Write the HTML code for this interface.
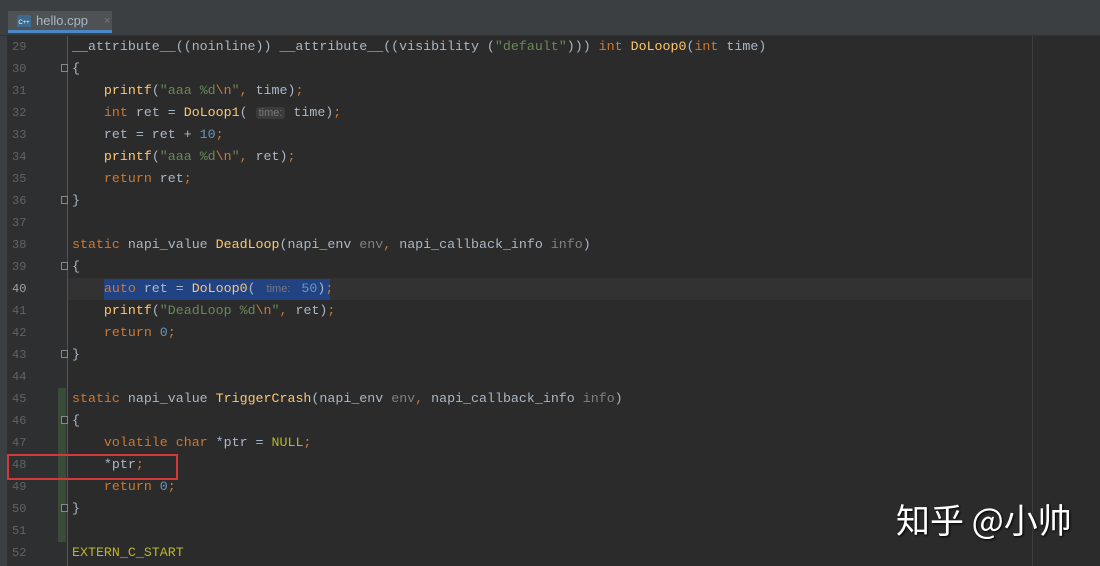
<!DOCTYPE html><html><head><meta charset="utf-8"><style>
body{margin:0;width:1100px;height:566px;overflow:hidden;background:#2b2b2b;position:relative;font-family:"Liberation Mono",monospace;}
.top{position:absolute;left:0;top:0;width:1100px;height:9px;background:#3c3f41;border-bottom:1px solid #323232}
.tabs{position:absolute;left:0;top:9px;width:1100px;height:26px;background:#3c3f41;border-bottom:1px solid #323232}
.tab{position:absolute;left:8px;top:2px;width:104px;height:22px;background:#4e5254;border-bottom:3px solid #4a88c7;box-sizing:border-box;color:#a9b7c6;font:13px "Liberation Sans",sans-serif;line-height:20px;padding-left:28px}
.tab i{position:absolute;left:9px;top:4px;width:14px;height:12px;background:#3d6a8c;font-style:normal;font-size:6px;color:#fff;line-height:16px;text-align:center}
.tab b{position:absolute;left:96px;top:0;color:#777;font-weight:normal;font-size:11px}
.strip{position:absolute;left:0;top:36px;width:7px;height:530px;background:#3c3f41}
.gut{position:absolute;left:7px;top:36px;width:60px;height:530px;background:#2e2f30;border-right:1px solid #555}
.rm{position:absolute;left:1032px;top:36px;width:1px;height:530px;background:#3d3d3d}
.ln{position:absolute;left:12px;width:30px;color:#606366;font-size:12px;line-height:22px}
.code{position:absolute;left:72px;color:#a9b7c6;font-size:13.3px;line-height:22px;white-space:pre}
.k{color:#cc7832}.f{color:#ffc66d}.s{color:#6a8759}.n{color:#6897bb}.g{color:#808080}.h{color:#787878;font-family:"Liberation Sans",sans-serif;font-size:11px;background:#3b3b3b;padding:0 3px;border-radius:3px}.m{color:#bbb529}
.cur{position:absolute;left:68px;top:278px;width:964px;height:22px;background:#323232}
.sel{position:absolute;left:104px;top:279px;width:226px;height:21px;background:#214283}
.green{position:absolute;left:58px;top:388px;width:8px;height:154px;background:#384c38}
.red{position:absolute;left:7px;top:454px;width:167px;height:22px;border:2px solid #d23a3a}
.wm{position:absolute;left:896px;top:494px;color:#fff;font:34px "Noto Sans CJK SC",sans-serif;text-shadow:1px 1px 2px #000}
.fold{position:absolute;left:61px;width:7px;height:8px;border:1px solid #888;box-sizing:border-box;background:#2e2f30}
</style></head><body>
<div class="top"></div>
<div class="tabs"><div class="tab"><i>C++</i>hello.cpp<b>×</b></div></div>
<div class="strip"></div><div class="gut"></div><div class="rm"></div>
<div class="cur"></div><div class="sel"></div><div class="green"></div>
<div class="fold" style="top:64px"></div><div class="fold" style="top:196px"></div><div class="fold" style="top:262px"></div><div class="fold" style="top:350px"></div><div class="fold" style="top:416px"></div><div class="fold" style="top:504px"></div>
<div class="ln" style="top:36px">29<br>30<br>31<br>32<br>33<br>34<br>35<br>36<br>37<br>38<br>39<br><span style="color:#a4a3a3">40</span><br>41<br>42<br>43<br>44<br>45<br>46<br>47<br>48<br>49<br>50<br>51<br>52</div>
<div class="code" style="top:36px">__attribute__((noinline)) __attribute__((visibility (<span class="s">"default"</span>))) <span class="k">int</span> <span class="f">DoLoop0</span>(<span class="k">int</span> time)
{
    <span class="f">printf</span>(<span class="s">"aaa %d<span class="k">\n</span>"</span><span class="k">,</span> time)<span class="k">;</span>
    <span class="k">int</span> ret = <span class="f">DoLoop1</span>( <span class="h">time:</span> time)<span class="k">;</span>
    ret = ret + <span class="n">10</span><span class="k">;</span>
    <span class="f">printf</span>(<span class="s">"aaa %d<span class="k">\n</span>"</span><span class="k">,</span> ret)<span class="k">;</span>
    <span class="k">return</span> ret<span class="k">;</span>
}

<span class="k">static</span> napi_value <span class="f">DeadLoop</span>(napi_env <span class="g">env</span><span class="k">,</span> napi_callback_info <span class="g">info</span>)
{
    <span class="k">auto</span> ret = <span class="f">DoLoop0</span>( <span class="h" style="background:none">time:</span> <span class="n">50</span>)<span class="k">;</span>
    <span class="f">printf</span>(<span class="s">"DeadLoop %d<span class="k">\n</span>"</span><span class="k">,</span> ret)<span class="k">;</span>
    <span class="k">return</span> <span class="n">0</span><span class="k">;</span>
}

<span class="k">static</span> napi_value <span class="f">TriggerCrash</span>(napi_env <span class="g">env</span><span class="k">,</span> napi_callback_info <span class="g">info</span>)
{
    <span class="k">volatile char</span> *ptr = <span class="m">NULL</span><span class="k">;</span>
    *ptr<span class="k">;</span>
    <span class="k">return</span> <span class="n">0</span><span class="k">;</span>
}

<span class="m">EXTERN_C_START</span></div>
<div class="red"></div>
<div class="wm">知乎 @小帅</div>
</body></html>
